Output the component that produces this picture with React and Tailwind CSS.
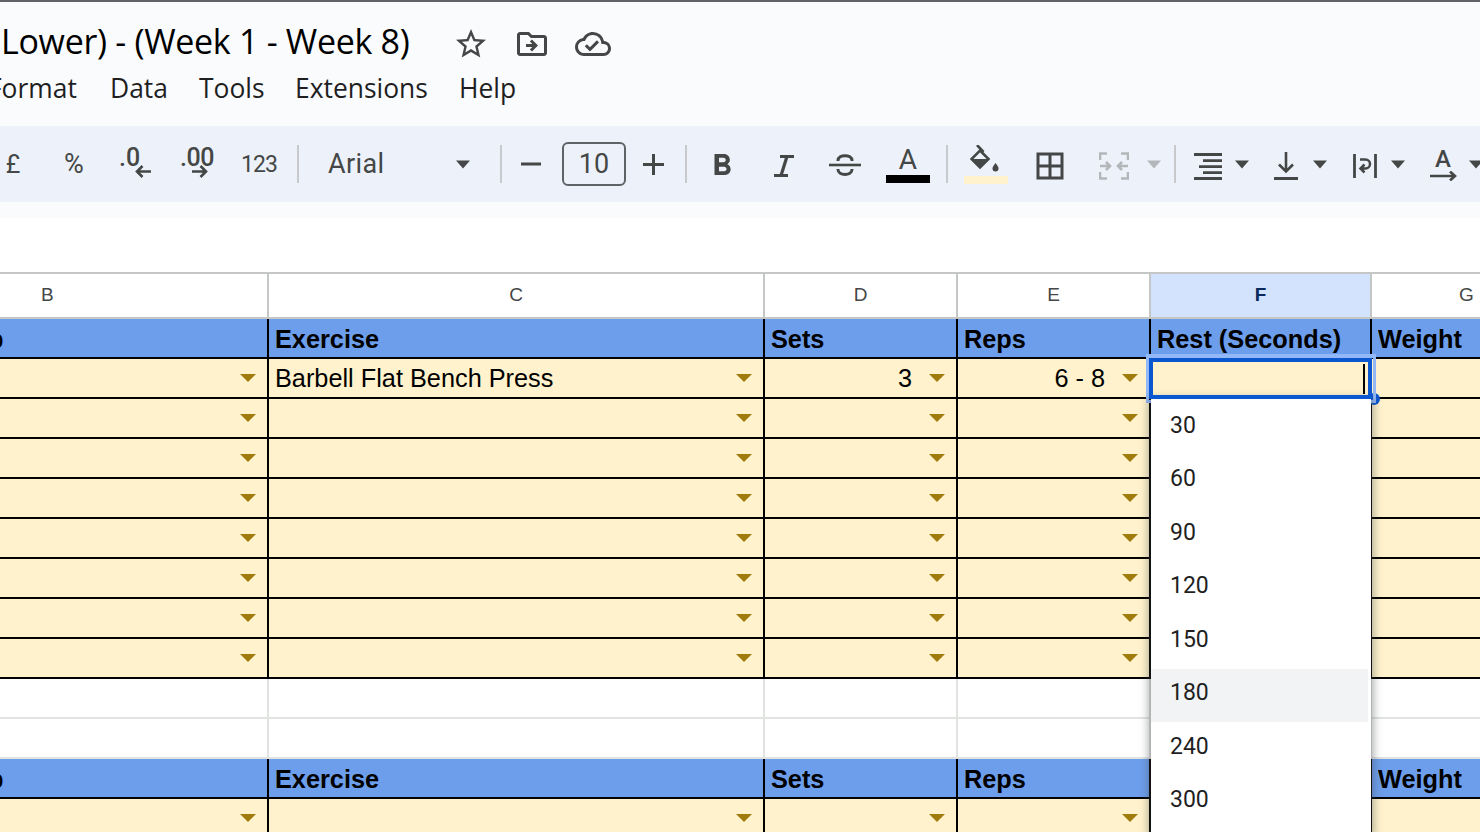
import React from "react";
import { MdOutlineStarBorder, MdOutlineDriveFileMove, MdOutlineCloudDone, MdFormatBold, MdBorderAll } from "react-icons/md";

const Sep = ({ ml }) => <div className={`h-[38px] w-[2px] bg-[#c7c9cc] shrink-0 ${ml}`} />;
const TCaret = ({ ml, light }) => (
  <svg width="16" height="9" viewBox="0 0 16 9" className={`shrink-0 ${ml}`}><path d="M1 0.5h14L8 8.5z" fill={light ? "#b4b6b9" : "#444746"} /></svg>
);
const Tx = ({ children, w, cls = "" }) => (
  <div className={`flex items-center justify-center shrink-0 font-['Roboto',sans-serif] text-[#444746] ${w} ${cls}`}>{children}</div>
);

function Toolbar() {
  return (
    <div className="h-[76px] bg-[#edf2fa] flex items-center overflow-hidden">
      <Tx w="w-[60px] -ml-[17px]" cls="text-[25px] leading-none">£</Tx>
      <Tx w="w-[62px]" cls="text-[27px] leading-none">%</Tx>
      <div className="relative w-[61px] h-[40px] shrink-0 font-['Roboto',sans-serif] text-[#444746]">
        <span className="absolute left-[14px] top-[2px] text-[25px] leading-[24px] font-medium">.0</span>
        <svg className="absolute left-[30px] top-[21px]" width="17" height="13" viewBox="0 0 17 13" fill="none" stroke="#444746" strokeWidth="2.6"><path d="M16 6.5H2M7.5 1L2 6.5 7.5 12" /></svg>
      </div>
      <div className="relative w-[62px] h-[40px] shrink-0 font-['Roboto',sans-serif] text-[#444746]">
        <span className="absolute left-[14px] top-[2px] text-[25px] leading-[24px] tracking-[-0.5px] font-medium">.00</span>
        <svg className="absolute left-[25px] top-[21px]" width="17" height="13" viewBox="0 0 17 13" fill="none" stroke="#444746" strokeWidth="2.6"><path d="M1 6.5h14M9.5 1L15 6.5 9.5 12" /></svg>
      </div>
      <Tx w="w-[62px]" cls="text-[23px] leading-none tracking-[-1px]">123</Tx>
      <Sep ml="ml-[7px]" />
      <span className="ml-[29px] w-[127px] shrink-0 font-['Roboto',sans-serif] text-[27px] text-[#444746] tracking-[0.4px]">Arial</span>
      <TCaret ml="" />
      <Sep ml="ml-[29px]" />
      <svg className="ml-[19px] shrink-0" width="20" height="4" viewBox="0 0 20 4"><rect width="20" height="3" y="0.5" fill="#444746" /></svg>
      <div className="ml-[21px] w-[64px] h-[44px] shrink-0 border-2 border-[#5f6368] rounded-[6px] flex items-center justify-center font-['Roboto',sans-serif] text-[27px] text-[#444746]">10</div>
      <svg className="ml-[17px] shrink-0" width="21" height="21" viewBox="0 0 21 21"><path d="M0 9h21v3H0zM9 0h3v21H9z" fill="#444746" /></svg>
      <Sep ml="ml-[21px]" />
      <MdFormatBold className="ml-[17px] mt-[4px] shrink-0" size={36} color="#444746" />
      <svg className="ml-[34px] mt-[4px] shrink-0" width="20" height="22" viewBox="0 0 20 22" fill="none" stroke="#444746"><path d="M6 1.500H20M0 20.500H14" strokeWidth="3" /><path d="M13 1.500 7 20.500" strokeWidth="3.200" /></svg>
      <svg className="ml-[35px] mt-[4px] shrink-0" width="32" height="24" viewBox="0 0 32 24" fill="none" stroke="#444746" strokeWidth="3"><path d="M0 11h32" strokeWidth="2.600" /><path d="M9 7v-.500C9 0 23 0 23 6.500V7" /><path d="M9 15v.500c0 6.500 14 6.500 14 0V15" /></svg>
      <div className="ml-[25px] w-[44px] shrink-0 flex flex-col items-center">
        <span className="font-['Roboto',sans-serif] text-[28px] leading-[28px] text-[#444746]">A</span>
        <div className="w-[44px] h-[8px] bg-black mt-[1px]" />
      </div>
      <Sep ml="ml-[16px]" />
      <div className="ml-[16px] w-[44px] shrink-0 flex flex-col items-center">
        <svg width="30" height="28" viewBox="0 0 30 28" className="-ml-[2px]">
          <path d="M7 0 13.500 7" stroke="#444746" strokeWidth="2.600" fill="none" />
          <path d="M10 5.500 18.500 14 10 22.500 1.500 14z" stroke="#444746" strokeWidth="2.600" fill="none" />
          <path d="M1.500 14h17L10 22.500z" fill="#444746" />
          <path d="M25.500 18c2 2.500 3 4 3 5.500a3 3 0 0 1-6 0c0-1.500 1-3 3-5.500z" fill="#444746" />
        </svg>
        <div className="w-[44px] h-[8px] bg-[#fff2cc] mt-[3px]" />
      </div>
      <MdBorderAll className="ml-[24px] mt-[4px] shrink-0" size={36} color="#444746" />
      <svg className="ml-[31px] mt-[4px] shrink-0" width="30" height="28" viewBox="0 0 30 28" fill="none" stroke="#b4b6b9" strokeWidth="2.600"><path d="M8 1.500H1V8M1 20V26.500H8M22 1.500H29V8M29 20V26.500H22M1 14h10M7 10l4 4-4 4M29 14H19M23 10l-4 4 4 4" /></svg>
      <TCaret ml="ml-[17px]" light />
      <Sep ml="ml-[12px]" />
      <svg className="ml-[18px] mt-[4px] shrink-0" width="28" height="27" viewBox="0 0 28 27" fill="#444746"><path d="M0 0h28v3H0zM9 6.200h19V9H9zM5 12.300h23v2.800H5zM9 18.300h19v2.800H9zM0 24h28v3H0z" /></svg>
      <TCaret ml="ml-[12px]" />
      <svg className="ml-[24px] mt-[4px] shrink-0" width="24" height="28" viewBox="0 0 24 28" fill="none" stroke="#444746" strokeWidth="2.6"><path d="M12 0v19M5 12.500l7 7 7-7" /><path d="M0 26.500h24" strokeWidth="3" /></svg>
      <TCaret ml="ml-[14px]" />
      <svg className="ml-[25px] mt-[4px] shrink-0" width="24" height="24" viewBox="0 0 24 24" fill="none" stroke="#444746" strokeWidth="2.800"><path d="M1.500 0v24M22.500 0v24" /><path d="M7 5.500h5.500a4.500 4.500 0 0 1 0 9H8M11.500 10.500l-4 4 4 4" strokeWidth="2.500" /></svg>
      <TCaret ml="ml-[13px]" />
      <div className="ml-[22px] w-[30px] shrink-0 flex flex-col items-center relative">
        <span className="font-['Roboto',sans-serif] font-medium text-[24px] leading-[24px] text-[#444746]">A</span>
        <svg width="28" height="10" viewBox="0 0 28 10" fill="none" stroke="#444746" strokeWidth="2.600"><path d="M1 5h25M21 0.500l5 4.500-5 4.500" /></svg>
      </div>
      <TCaret ml="ml-[10px]" />
    </div>
  );
}

const Caret = ({ ml = "ml-auto" }) => (
  <svg width="16" height="8" viewBox="0 0 16 8" className={`shrink-0 mr-[11px] ${ml}`}><path d="M0 0h16L8 8z" fill="#a07c0f" /></svg>
);

const widths = ["w-[269px]", "w-[496px]", "w-[193px]", "w-[193px]", "w-[221px]", "flex-1"];

function Cell({ i, cls = "", children }) {
  return <div className={`${widths[i]} shrink-0 h-full flex items-center ${i < 5 ? "border-r-2" : ""} ${cls}`}>{children}</div>;
}

function ColHead() {
  return (
    <div className="h-[47px] border-y-2 border-[#c4c7c5] flex bg-white font-['Liberation_Sans',sans-serif] text-[19px] text-[#444746]">
      <div className="w-[269px] shrink-0 border-r-2 border-[#c4c7c5] flex items-center pl-[41px]">B</div>
      <div className="w-[496px] shrink-0 border-r-2 border-[#c4c7c5] flex items-center justify-center">C</div>
      <div className="w-[193px] shrink-0 border-r-2 border-[#c4c7c5] flex items-center justify-center">D</div>
      <div className="w-[193px] shrink-0 border-r-2 border-[#c4c7c5] flex items-center justify-center">E</div>
      <div className="w-[221px] shrink-0 border-r-2 border-[#c4c7c5] flex items-center justify-center bg-[#d3e3fd] font-bold text-[#0b2a5c]">F</div>
      <div className="flex-1 flex items-center pl-[87px]">G</div>
    </div>
  );
}

function HeaderRow({ hideF }) {
  const labels = ["p", "Exercise", "Sets", "Reps", hideF ? "" : "Rest (Seconds)", "Weight"];
  return (
    <div className="h-[40px] flex bg-[#6d9eeb] border-b-2 border-black font-['Liberation_Sans',sans-serif] font-bold text-[25.3px] text-black">
      {labels.map((t, i) => (
        <Cell key={i} i={i} cls={`border-black pt-[3px] ${i === 0 ? "-indent-[12px]" : "pl-[6px]"}`}>{t}</Cell>
      ))}
    </div>
  );
}

function DataRow({ first }) {
  const C = <Caret />;
  return (
    <div className="h-[40px] flex bg-[#fff2cc] border-b-2 border-black font-['Liberation_Sans',sans-serif] text-[25.3px] text-black">
      <Cell i={0} cls="border-black">{C}</Cell>
      <Cell i={1} cls="border-black pl-[6px]">{first && <span className="pt-[2px]">Barbell Flat Bench Press</span>}{C}</Cell>
      <Cell i={2} cls="border-black justify-end">{first && <span className="pt-[2px]">3</span>}<Caret ml={first ? "ml-[17px]" : "ml-auto"} /></Cell>
      <Cell i={3} cls="border-black justify-end">{first && <span className="pt-[2px]">6 - 8</span>}<Caret ml={first ? "ml-[17px]" : "ml-auto"} /></Cell>
      <Cell i={4} cls="border-black" />
      <Cell i={5} />
    </div>
  );
}

const EmptyRow = () => (
  <div className="h-[40px] flex bg-white border-b-2 border-[#e1e3e1]">
    {widths.map((_, i) => <Cell key={i} i={i} cls="border-[#e1e3e1]" />)}
  </div>
);

function Dropdown() {
  const items = ["30", "60", "90", "120", "150", "180", "240", "300"];
  return (
    <div className="absolute left-[1151px] top-[399px] w-[220px] h-[433px] bg-white shadow-[0_2px_8px_3px_rgba(60,64,67,0.4)] pt-[2px] font-['Roboto',sans-serif] text-[23px] text-[#1f1f1f]">
      {items.map((t) => (
        <div key={t} className={`h-[53.5px] pl-[19px] mr-[3px] flex items-center pb-[4px] ${t === "180" ? "bg-[#f1f3f4]" : ""}`}>{t}</div>
      ))}
    </div>
  );
}

export default function App() {
  return (
    <div className="relative w-[1480px] h-[832px] overflow-hidden bg-white">
      <div className="bg-[#f9fbfd] h-[218px] border-t-2 border-[#5f6368]">
        <div className="h-[56px] flex items-center pl-[1px] pt-[22px] font-['Open_Sans',sans-serif] text-black">
          <span className="text-[34px] leading-none tracking-[-0.3px] w-[452px] shrink-0 whitespace-nowrap">Lower) - (Week 1 - Week 8)</span>
          <MdOutlineStarBorder className="mt-[6px] shrink-0 text-[#444746]" size={36} />
          <MdOutlineDriveFileMove className="mt-[6px] ml-[25px] shrink-0 text-[#444746]" size={36} />
          <MdOutlineCloudDone className="mt-[6px] ml-[25px] shrink-0 text-[#444746]" size={36} />
        </div>
        <div className="h-[68px] flex items-center pb-[6px] font-['Open_Sans',sans-serif] text-[26.4px] text-[#1f1f1f] whitespace-nowrap">
          <span className="-ml-[12px] w-[122px] shrink-0">Format</span>
          <span className="w-[89px] shrink-0">Data</span>
          <span className="w-[96px] shrink-0">Tools</span>
          <span className="w-[164px] shrink-0">Extensions</span>
          <span>Help</span>
        </div>
        <Toolbar />
      </div>
      <div className="h-[54px]" />
      <ColHead />
      <HeaderRow />
      {Array.from({ length: 8 }, (_, i) => <DataRow key={i} first={i === 0} />)}
      <EmptyRow />
      <EmptyRow />
      <HeaderRow hideF />
      <DataRow />

      <div className="absolute left-[1368px] top-[393px] w-[12px] h-[12px] rounded-full bg-[#0b57d0]" />
      <div className="absolute left-[1146px] top-[354px] w-[230px] h-[49px] border-x-[3px] border-t-[4px] border-b-[3px] border-[#93b8f8]" />
      <Dropdown />
      <div className="absolute left-[1149px] top-[358px] w-[223px] h-[41px] border-[4px] border-[#0b57d0] flex items-center justify-end pr-[3px]">
        <div className="w-[2px] h-[30px] bg-black" />
      </div>
    </div>
  );
}
